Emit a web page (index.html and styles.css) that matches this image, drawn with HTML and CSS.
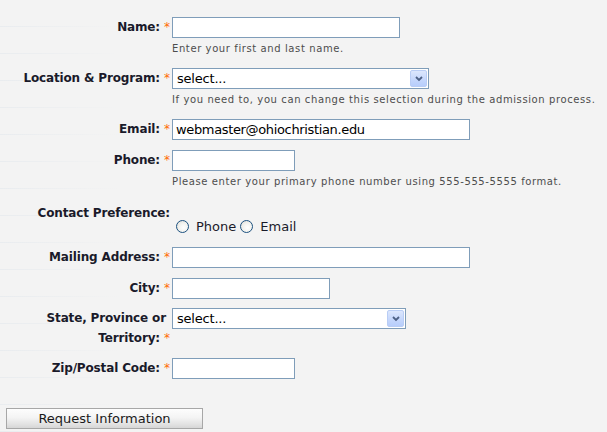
FILE: index.html
```html
<!DOCTYPE html>
<html>
<head>
<meta charset="utf-8">
<link rel="stylesheet" href="styles.css">
</head>
<body>
<form class="form">
  <div class="row hint-row">
    <label class="label">Name: <span class="req">*</span></label>
    <div class="field">
      <input class="text w-name" type="text">
      <div class="hint">Enter your first and last name.</div>
    </div>
  </div>
  <div class="row hint-row">
    <label class="label">Location &amp; Program: <span class="req">*</span></label>
    <div class="field">
      <div class="select w-loc"><span class="sel-text">select...</span><span class="sel-btn"><svg width="8" height="6" viewBox="0 0 8 6"><path d="M1 1 L4 4 L7 1" fill="none" stroke="#4d6185" stroke-width="1.8"/></svg></span></div>
      <div class="hint">If you need to, you can change this selection during the admission process.</div>
    </div>
  </div>
  <div class="row">
    <label class="label">Email: <span class="req">*</span></label>
    <div class="field">
      <input class="text w-email" type="text" value="webmaster@ohiochristian.edu">
    </div>
  </div>
  <div class="row hint-row">
    <label class="label">Phone: <span class="req">*</span></label>
    <div class="field">
      <input class="text w-short" type="text">
      <div class="hint">Please enter your primary phone number using 555-555-5555 format.</div>
    </div>
  </div>
  <div class="row contact-row">
    <label class="label">Contact Preference:</label>
    <div class="field radios">
      <label class="radio"><span class="circle"></span>Phone</label>
      <label class="radio"><span class="circle"></span>Email</label>
    </div>
  </div>
  <div class="row">
    <label class="label">Mailing Address: <span class="req">*</span></label>
    <div class="field">
      <input class="text w-email" type="text">
    </div>
  </div>
  <div class="row">
    <label class="label">City: <span class="req">*</span></label>
    <div class="field">
      <input class="text w-city" type="text">
    </div>
  </div>
  <div class="row state-row">
    <label class="label">State, Province or&nbsp;<br>Territory: <span class="req">*</span></label>
    <div class="field">
      <div class="select w-state"><span class="sel-text">select...</span><span class="sel-btn"><svg width="8" height="6" viewBox="0 0 8 6"><path d="M1 1 L4 4 L7 1" fill="none" stroke="#4d6185" stroke-width="1.8"/></svg></span></div>
    </div>
  </div>
  <div class="row">
    <label class="label">Zip/Postal Code: <span class="req">*</span></label>
    <div class="field">
      <input class="text w-short" type="text">
    </div>
  </div>
  <div class="actions">
    <button class="submit" type="button">Request Information</button>
  </div>
</form>
</body>
</html>
```
FILE: styles.css
```css
html, body {
  margin: 0;
  padding: 0;
}
body {
  width: 607px;
  height: 432px;
  overflow: hidden;
  background-color: #f3f3f3;
  background-image:
    linear-gradient(90deg, rgba(243,243,243,0) 0, #f3f3f3 120px),
    repeating-linear-gradient(180deg, transparent 0, transparent 26px, #e9ecef 26px, #e9ecef 27px);
  font-family: "DejaVu Sans", Verdana, sans-serif;
  color: #1a1a2a;
}
.form {
  display: flex;
  flex-direction: column;
  gap: 10px;
  padding-top: 17px;
}
.row {
  display: grid;
  grid-template-columns: 170px 1fr;
  column-gap: 2px;
  align-items: start;
}
.hint-row {
  padding-bottom: 2px;
}
.label {
  text-align: right;
  font-size: 12px;
  font-weight: bold;
  line-height: 20px;
  letter-spacing: -0.15px;
  color: #1a1a2a;
}
.req {
  color: #ff6a00;
  font-weight: normal;
  font-size: 12px;
  letter-spacing: 0;
}
.field {
  display: flex;
  flex-direction: column;
  align-items: flex-start;
}
.text {
  box-sizing: border-box;
  height: 21px;
  margin: 0;
  padding: 0 3px;
  border: 1px solid #7f9db9;
  background: #fff;
  font-family: "DejaVu Sans", Verdana, sans-serif;
  font-size: 13px;
  letter-spacing: -0.35px;
  color: #000;
  outline: none;
}
.w-name { width: 228px; }
.w-email { width: 298px; }
.w-short { width: 123px; }
.w-city { width: 158px; }
.w-loc { width: 257px; }
.w-state { width: 234px; }
.select {
  box-sizing: border-box;
  height: 21px;
  border: 1px solid #7f9db9;
  background: #fff;
  display: flex;
  align-items: center;
  justify-content: space-between;
  padding: 1px;
}
.sel-text {
  padding-left: 3px;
  font-size: 13px;
  letter-spacing: -0.2px;
  color: #000;
}
.sel-btn {
  box-sizing: border-box;
  width: 17px;
  height: 17px;
  border: 1px solid #b9cdf5;
  border-radius: 2px;
  background: linear-gradient(180deg, #dce7fd 0, #c4d6fc 60%, #b7cdfb 100%);
  display: flex;
  align-items: center;
  justify-content: center;
}
.hint {
  margin-top: 4px;
  font-size: 10px;
  line-height: 14px;
  letter-spacing: 0.6px;
  color: #4d4d4d;
  white-space: nowrap;
}
.contact-row .label {
  padding-top: 2px;
}
.radios {
  flex-direction: row;
  align-items: center;
  padding-top: 14px;
  height: 22px;
  box-sizing: content-box;
}
.radio {
  display: flex;
  align-items: center;
  font-size: 13px;
  color: #1a1a2a;
}
.circle {
  box-sizing: border-box;
  width: 13px;
  height: 13px;
  border-radius: 50%;
  border: 1px solid #1c5180;
  background: radial-gradient(circle at 60% 60%, #ffffff 0, #f2f2ee 50%, #d8d7d0 100%);
  margin: 0 7px 0 4px;
}
.state-row {
  margin-top: -1px;
}
.actions {
  padding: 19px 0 0 6px;
}
.submit {
  box-sizing: border-box;
  width: 197px;
  height: 21px;
  margin: 0;
  border: 1px solid #a7a7a7;
  background: linear-gradient(180deg, #fdfdfd 0, #f4f4f4 45%, #e2e2e2 80%, #d6d6d6 100%);
  font-family: "DejaVu Sans", Tahoma, sans-serif;
  font-size: 13px;
  color: #1a1a1a;
  padding: 0;
}
```
